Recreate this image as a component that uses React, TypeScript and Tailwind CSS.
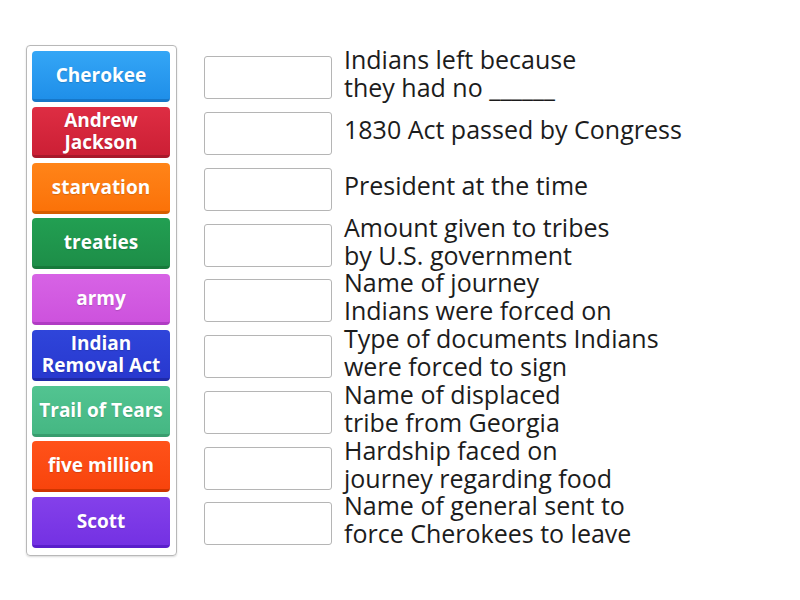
import React from "react";

const tiles = [
  { label: "Cherokee", cls: "bg-gradient-to-b from-[#34a6f6] to-[#1f8fe9] border-b-[#1677c9]" },
  { label: "Andrew Jackson", cls: "bg-gradient-to-b from-[#de2d43] to-[#cc1f35] border-b-[#a8182a]" },
  { label: "starvation", cls: "bg-gradient-to-b from-[#ff8418] to-[#fb7208] border-b-[#d65e00]" },
  { label: "treaties", cls: "bg-gradient-to-b from-[#229f52] to-[#1d8e48] border-b-[#177a3b]" },
  { label: "army", cls: "bg-gradient-to-b from-[#d763e5] to-[#cd52dd] border-b-[#b03cc3]" },
  { label: "Indian Removal Act", cls: "bg-gradient-to-b from-[#2f45da] to-[#2838cf] border-b-[#1f2aa8]" },
  { label: "Trail of Tears", cls: "bg-gradient-to-b from-[#52c491] to-[#45b783] border-b-[#389d6e]" },
  { label: "five million", cls: "bg-gradient-to-b from-[#ff5219] to-[#f8440c] border-b-[#cf3500]" },
  { label: "Scott", cls: "bg-gradient-to-b from-[#8440ea] to-[#7431e3] border-b-[#5a1ecb]" },
];

const clues = [
  ["Indians left because", "they had no ______"],
  ["1830 Act passed by Congress"],
  ["President at the time"],
  ["Amount given to tribes", "by U.S. government"],
  ["Name of journey", "Indians were forced on"],
  ["Type of documents Indians", "were forced to sign"],
  ["Name of displaced", "tribe from Georgia"],
  ["Hardship faced on", "journey regarding food"],
  ["Name of general sent to", "force Cherokees to leave"],
];

export default function App() {
  return (
    <div
      className="w-[800px] h-[600px] bg-white flex items-start pt-[45px] pl-[26px]"
      style={{ fontFamily: '"Open Sans", sans-serif' }}
    >
      <div className="w-[151px] h-[511px] border border-[#b8b8b8] rounded-[4px] pl-[5px] pr-[6px] pt-[5px] flex flex-col gap-[4.75px] shadow-[0_1px_2px_rgba(0,0,0,0.15)]">
        {tiles.map((t) => (
          <div
            key={t.label}
            className={`h-[51px] shrink-0 rounded-[4px] border-b-[3px] flex items-center justify-center text-center text-white font-bold text-[19px] leading-[22px] px-0.5 [text-shadow:0_1px_1px_rgba(0,0,0,0.15)] ${t.cls}`}
          >
            {t.label}
          </div>
        ))}
      </div>
      <div className="flex flex-col ml-[27px] mt-[5px]">
        {clues.map((c, i) => (
          <div key={i} className="h-[55.75px] flex items-center">
            <div className="w-[128px] h-[43px] border border-[#b5b5b5] rounded-[3px] bg-white shrink-0" />
            <div className="ml-[12px] pb-[9px] text-[25px] leading-[28px] text-[#1c1c1c]">
              {c.map((l, j) => (
                <div key={j} className="whitespace-nowrap">{l}</div>
              ))}
            </div>
          </div>
        ))}
      </div>
    </div>
  );
}
